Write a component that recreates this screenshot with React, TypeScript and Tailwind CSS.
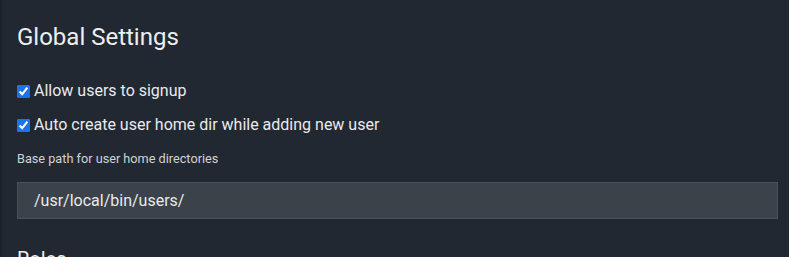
import React from 'react';

const App: React.FC = () => {
  return (
    <div
      className="w-[789px] h-[257px] overflow-hidden bg-[#222831] border-l-2 border-[#1c2229] text-[#e8eaec]"
      style={{ fontFamily: 'Roboto, "Liberation Sans", sans-serif' }}
    >
      <div className="pl-[15px] pr-[10px] pt-[22px]">
        <h2 className="text-[24px] leading-[30px] font-normal text-[#eceef0]">Global Settings</h2>

        <div className="mt-[30px] space-y-[16px]">
          <label className="flex items-center gap-[4px] text-[16px] leading-[18px]">
            <input type="checkbox" defaultChecked className="w-[13px] h-[13px] accent-[#1a73e8] m-0" />
            <span>Allow users to signup</span>
          </label>
          <label className="flex items-center gap-[4px] text-[16px] leading-[18px]">
            <input type="checkbox" defaultChecked className="w-[13px] h-[13px] accent-[#1a73e8] m-0" />
            <span>Auto create user home dir while adding new user</span>
          </label>
        </div>

        <div className="mt-[17px]">
          <p className="text-[12.7px] leading-[16px] text-[#d0d3d6]">Base path for user home directories</p>
          <input
            type="text"
            defaultValue="/usr/local/bin/users/"
            className="mt-[15px] w-[761px] h-[37px] px-[16px] bg-[#3b424a] border border-[#4a5159] text-[16px] text-[#e8eaec] outline-none"
          />
        </div>

        <h3 className="mt-[28px] text-[20px] leading-[24px] text-[#eceef0]">Roles</h3>
      </div>
    </div>
  );
};

export default App;
